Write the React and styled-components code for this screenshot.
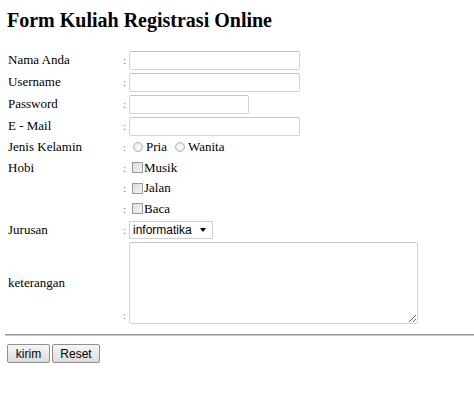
import React from "react";
import styled, { createGlobalStyle } from "styled-components";

const GlobalStyle = createGlobalStyle`
  body {
    margin: 0;
    background: #ffffff;
    font-family: "Liberation Serif", "Times New Roman", serif;
    color: #000000;
  }
`;

const Page = styled.div`
  padding: 8px 0 0 0;
  width: 474px;
  height: 395px;
  box-sizing: border-box;
`;

const Title = styled.h2`
  margin: 0 0 18px 7px;
  font-size: 20px;
  font-weight: bold;
  line-height: 24px;
`;

const FormGrid = styled.div`
  display: grid;
  grid-template-columns: 115px 6px auto;
  row-gap: 2px;
  padding-left: 8px;
  font-size: 13px;
  align-items: center;
`;

const Label = styled.div`
  line-height: 18px;
`;

const Colon = styled.div`
  color: #777777;
  font-size: 11px;
  line-height: 18px;
  align-self: ${(p) => (p.bottom ? "end" : "center")};
`;

const Field = styled.div`
  display: flex;
  align-items: center;
  min-height: ${(p) => (p.tall ? "18.5px" : "20px")};
`;

const TextInput = styled.input`
  box-sizing: border-box;
  width: ${(p) => p.w}px;
  height: 19px;
  border: 1px solid #d4d4d4;
  border-top-color: #c4c4c4;
  border-radius: 2px;
  padding: 1px 2px;
  font-size: 13px;
  outline: none;
`;

const Radio = styled.span`
  display: inline-block;
  box-sizing: border-box;
  width: 10px;
  height: 10px;
  border-radius: 50%;
  border: 1px solid #b5b5b5;
  background: radial-gradient(circle at 50% 50%, #ffffff 0, #e0e0e0 100%);
  margin: 0 3px 0 4px;
`;

const Check = styled.span`
  display: inline-block;
  box-sizing: border-box;
  width: 11px;
  height: 11px;
  border: 1px solid #9a9a9a;
  background: linear-gradient(135deg, #dcdcdc 0%, #f4f4f4 100%);
  margin: 0 1px 0 3px;
`;

const Option = styled.span`
  margin-right: 4px;
`;

const Select = styled.div`
  box-sizing: border-box;
  width: 84px;
  height: 18px;
  border: 1px solid #d0d0d0;
  display: flex;
  align-items: center;
  justify-content: space-between;
  padding: 0 6px 0 3px;
  font-family: "Liberation Sans", Arial, sans-serif;
  font-size: 12px;
`;

const Arrow = styled.span`
  width: 0;
  height: 0;
  border-left: 3px solid transparent;
  border-right: 3px solid transparent;
  border-top: 4px solid #000;
`;

const TextArea = styled.textarea`
  box-sizing: border-box;
  width: 289px;
  height: 82px;
  border: 1px solid #d4d4d4;
  border-top-color: #c4c4c4;
  border-radius: 2px;
  resize: both;
  outline: none;
  display: block;
`;

const Rule = styled.hr`
  margin: 10px 0 0 5px;
  border: none;
  border-top: 1px solid #9a9a9a;
  border-bottom: 1px solid #c8c8c8;
  height: 0;
`;

const Buttons = styled.div`
  display: flex;
  gap: 2px;
  padding: 8px 0 0 7px;
`;

const Button = styled.button`
  box-sizing: border-box;
  width: ${(p) => p.w}px;
  height: 19px;
  padding: 0;
  font-family: "Liberation Sans", Arial, sans-serif;
  font-size: 12px;
  border: 1px solid #8f8f8f;
  border-radius: 2px;
  background: linear-gradient(#f6f6f6, #dcdcdc);
  color: #000;
`;

export default function App() {
  return (
    <Page>
      <GlobalStyle />
      <Title>Form Kuliah Registrasi Online</Title>
      <FormGrid>
        <Label>Nama Anda</Label>
        <Colon>:</Colon>
        <Field>
          <TextInput w={171} />
        </Field>

        <Label>Username</Label>
        <Colon>:</Colon>
        <Field>
          <TextInput w={171} />
        </Field>

        <Label>Password</Label>
        <Colon>:</Colon>
        <Field>
          <TextInput w={120} type="password" />
        </Field>

        <Label>E - Mail</Label>
        <Colon>:</Colon>
        <Field>
          <TextInput w={171} />
        </Field>

        <Label>Jenis Kelamin</Label>
        <Colon>:</Colon>
        <Field tall>
          <Radio />
          <Option>Pria</Option>
          <Radio />
          <Option>Wanita</Option>
        </Field>

        <Label>Hobi</Label>
        <Colon>:</Colon>
        <Field tall>
          <Check />
          Musik
        </Field>

        <Label />
        <Colon>:</Colon>
        <Field tall>
          <Check />
          Jalan
        </Field>

        <Label />
        <Colon>:</Colon>
        <Field tall>
          <Check />
          Baca
        </Field>

        <Label>Jurusan</Label>
        <Colon>:</Colon>
        <Field>
          <Select>
            informatika
            <Arrow />
          </Select>
        </Field>

        <Label>keterangan</Label>
        <Colon bottom>:</Colon>
        <Field>
          <TextArea />
        </Field>
      </FormGrid>
      <Rule />
      <Buttons>
        <Button w={43}>kirim</Button>
        <Button w={48}>Reset</Button>
      </Buttons>
    </Page>
  );
}
